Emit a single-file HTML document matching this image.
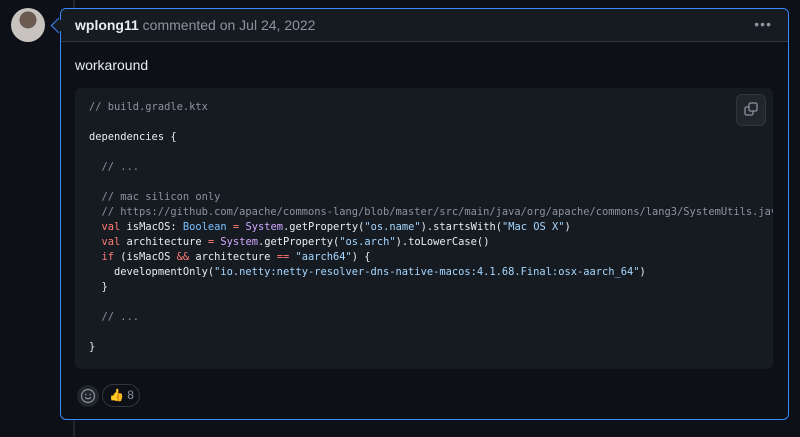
<!DOCTYPE html>
<html><head><style>
body{margin:0;width:800px;height:437px;background:#0d1117;overflow:hidden;font-family:"Liberation Sans",sans-serif;position:relative}
.tl{position:absolute;left:73px;top:0;width:2px;height:437px;background:#21262d}
.av{position:absolute;left:11px;top:8px;width:34px;height:34px;border-radius:50%;background:radial-gradient(circle at 50% 35%,#6b5a50 0 30%,#c9c3c0 31% 100%);}
.box{position:absolute;left:60px;top:8px;width:727px;height:410px;border:1px solid #388bfd;border-radius:6px;background:#0d1117;overflow:hidden}
.arr{position:absolute;left:53px;top:20px;width:10px;height:10px;background:#161b22;border-left:1px solid #388bfd;border-bottom:1px solid #388bfd;transform:rotate(45deg);z-index:2}
.hd{height:32px;background:#161b22;border-bottom:1px solid #30363d;color:#8b949e;font-size:14px;line-height:32px;padding-left:14px}
.hd b{color:#e6edf3}
.dots{position:absolute;right:16px;top:0;color:#8b949e;font-size:14px;line-height:30px;letter-spacing:1px}
.p{position:absolute;left:14px;top:48px;color:#e6edf3;font-size:14px}
.code{position:absolute;left:14px;top:79px;width:698px;height:281px;background:#161b22;border-radius:6px}
pre{margin:0;padding:12px 0 0 14px;font-family:"DejaVu Sans Mono","Liberation Mono",monospace;font-size:10.4px;line-height:15px;color:#e6edf3;white-space:pre;overflow:hidden}
.c{color:#8b949e}.k{color:#ff7b72}.b{color:#79c0ff}.s{color:#a5d6ff}.f{color:#d2a8ff}
.cp{position:absolute;right:7px;top:6px;width:28px;height:30px;border:1px solid #30363d;border-radius:6px;background:#21262d}
.em{position:absolute;left:16px;top:376px;width:22px;height:22px;border-radius:50%;background:#21262d}
.rx{position:absolute;left:41px;top:375px;width:36px;height:21px;border:1px solid #30363d;border-radius:12px;color:#8b949e;font-size:12px;line-height:21px;text-indent:6px}
</style></head><body>
<div class="tl"></div>
<div class="av"></div>
<div class="arr"></div>
<div class="box">
<div class="hd"><b>wplong11</b> commented on Jul 24, 2022<span class="dots">•••</span></div>
<div class="p">workaround</div>
<div class="code"><pre><span class="c">// build.gradle.ktx</span>

dependencies {

  <span class="c">// ...</span>

  <span class="c">// mac silicon only</span>
  <span class="c">// https://github.com/apache/commons-lang/blob/master/src/main/java/org/apache/commons/lang3/SystemUtils.java</span>
  <span class="k">val</span> isMacOS: <span class="b">Boolean</span> <span class="k">=</span> <span class="f">System</span>.getProperty(<span class="s">"os.name"</span>).startsWith(<span class="s">"Mac OS X"</span>)
  <span class="k">val</span> architecture <span class="k">=</span> <span class="f">System</span>.getProperty(<span class="s">"os.arch"</span>).toLowerCase()
  <span class="k">if</span> (isMacOS <span class="k">&amp;&amp;</span> architecture <span class="k">==</span> <span class="s">"aarch64"</span>) {
    developmentOnly(<span class="s">"io.netty:netty-resolver-dns-native-macos:4.1.68.Final:osx-aarch_64"</span>)
  }

  <span class="c">// ...</span>

}</pre>
<div class="cp"><svg width="28" height="30" viewBox="0 0 28 30"><rect x="8" y="12" width="8" height="8" rx="1.5" fill="none" stroke="#8b949e" stroke-width="1.3"/><rect x="12" y="8" width="8" height="8" rx="1.5" fill="#21262d" stroke="#8b949e" stroke-width="1.3"/></svg></div>
</div>
<div class="em"><svg width="22" height="22"><circle cx="11" cy="11" r="6.5" fill="none" stroke="#8b949e" stroke-width="1.2"/><path d="M8 12.5q3 2.5 6 0" fill="none" stroke="#8b949e" stroke-width="1.2"/><circle cx="8.8" cy="9.5" r=".8" fill="#8b949e"/><circle cx="13.2" cy="9.5" r=".8" fill="#8b949e"/></svg></div>
<div class="rx">👍 8</div>
</div>
</body></html>
